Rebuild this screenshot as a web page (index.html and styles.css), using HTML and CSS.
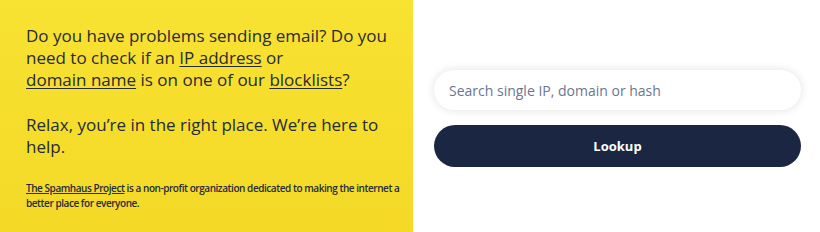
FILE: index.html
```html
<!DOCTYPE html>
<html lang="en">
<head>
<meta charset="utf-8">
<title>Spamhaus lookup</title>
<link rel="stylesheet" href="styles.css">
</head>
<body>
<div class="hero">
  <section class="intro">
    <p class="lead">Do you have problems sending email? Do you need to check if an <a href="#">IP address</a> or<br><a href="#">domain name</a> is on one of our <a href="#">blocklists</a>?</p>
    <p class="lead">Relax, you’re in the right place. We’re here to help.</p>
    <p class="small"><a href="#">The Spamhaus Project</a> is a non-profit organization dedicated to making the internet a better place for everyone.</p>
  </section>
  <section class="search">
    <form class="lookup-form">
      <input class="query" type="text" placeholder="Search single IP, domain or hash">
      <button class="lookup" type="button">Lookup</button>
    </form>
  </section>
</div>
</body>
</html>
```
FILE: styles.css
```css
html, body {
  margin: 0;
  padding: 0;
  background: #ffffff;
}
body {
  font-family: "Open Sans", "Noto Sans", sans-serif;
  color: #262b38;
}
.hero {
  display: flex;
  height: 232px;
}
.intro {
  width: 413px;
  box-sizing: border-box;
  padding: 25px 10px 0 26px;
  background: linear-gradient(180deg, #f8e232 0%, #f4d927 100%);
}
.intro p {
  margin: 0;
}
.lead {
  font-size: 17px;
  line-height: 22px;
  margin-bottom: 23px !important;
  padding-right: 8px;
}
.intro a {
  display: inline-block;
  color: inherit;
  text-decoration: underline;
  text-underline-offset: 2px;
  text-decoration-thickness: 1px;
}
.small {
  font-size: 10px;
  line-height: 15px;
  font-weight: 600;
  letter-spacing: -0.45px;
}
.small a {
  text-underline-offset: 1px;
}
.search {
  flex: 1;
  display: flex;
  align-items: flex-start;
  padding: 70px 19px 0 21px;
}
.lookup-form {
  display: flex;
  flex-direction: column;
  gap: 15px;
  width: 100%;
}
.query {
  height: 40px;
  box-sizing: border-box;
  border: none;
  border-radius: 20px;
  padding: 0 15px;
  font-family: inherit;
  font-size: 14px;
  color: #262b38;
  background: #fff;
  box-shadow: 0 0 10px rgba(0, 0, 0, 0.12);
  outline: none;
}
.query::placeholder {
  color: #6a7593;
}
.lookup {
  height: 42px;
  border: none;
  border-radius: 21px;
  background: #1b2742;
  color: #ffffff;
  font-family: inherit;
  font-size: 13px;
  font-weight: 700;
}
```
